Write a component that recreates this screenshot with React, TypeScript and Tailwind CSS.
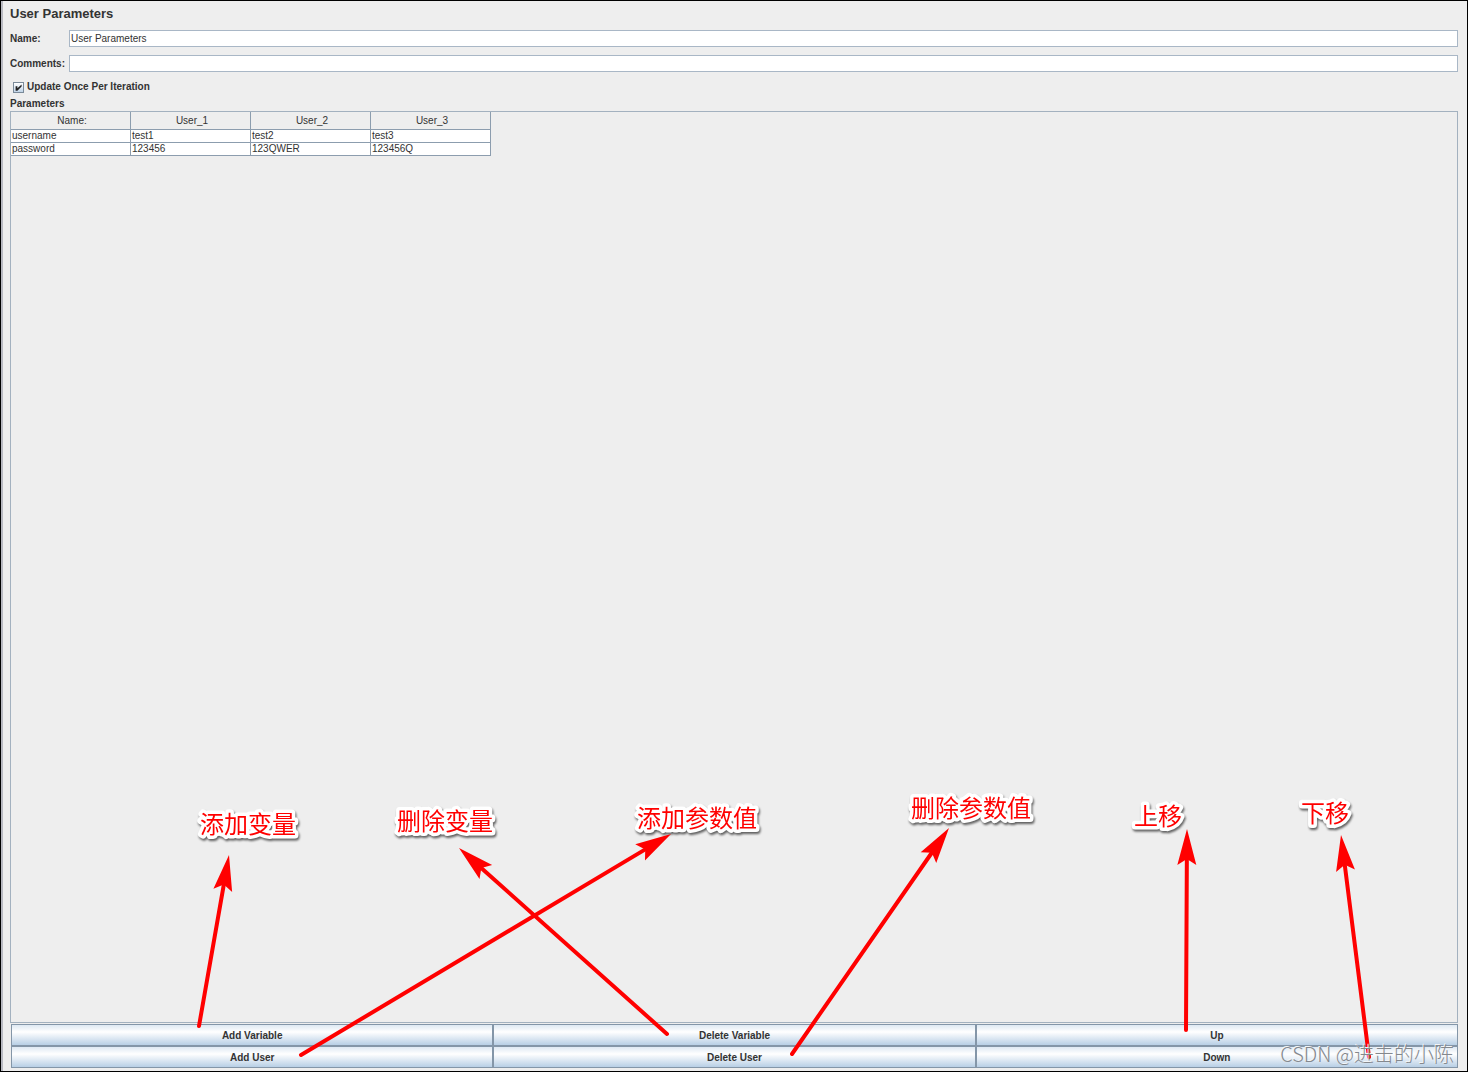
import { useState } from 'react';

interface Parameter {
  name: string;
  values: string[];
}

interface Note {
  text: string;
  at: [number, number];
  from: [number, number];
  to: [number, number];
}

const users = ['User_1', 'User_2', 'User_3'];

const parameters: Parameter[] = [
  { name: 'username', values: ['test1', 'test2', 'test3'] },
  { name: 'password', values: ['123456', '123QWER', '123456Q'] },
];

const actions = ['Add Variable', 'Delete Variable', 'Up', 'Add User', 'Delete User', 'Down'];

const notes: Note[] = [
  { text: '添加变量', at: [200, 833], from: [199, 1026], to: [229, 855] },
  { text: '删除变量', at: [397, 830], from: [667, 1034], to: [459, 848] },
  { text: '添加参数值', at: [637, 827], from: [301, 1055], to: [671, 834] },
  { text: '删除参数值', at: [911, 817], from: [792, 1054], to: [949, 828] },
  { text: '上移', at: [1134, 825], from: [1186, 1030], to: [1187, 829] },
  { text: '下移', at: [1301, 822], from: [1369, 1057], to: [1341, 835] },
];

// stops the shaft inside the arrow head so that it does not poke out of the tip
function shaftEnd({ from, to }: Note) {
  const length = Math.hypot(to[0] - from[0], to[1] - from[1]);
  const t = (length - 28) / length;
  return [from[0] + (to[0] - from[0]) * t, from[1] + (to[1] - from[1]) * t];
}

function TextField({ id, label, value, onChange }: {
  id: string;
  label: string;
  value: string;
  onChange: (value: string) => void;
}) {
  return (
    <div className="flex items-center">
      <label htmlFor={id} className="w-[59px] shrink-0 font-bold">{label}</label>
      <input
        id={id}
        type="text"
        value={value}
        onChange={(e) => onChange(e.target.value)}
        className="h-[17px] min-w-0 flex-1 border border-[#a9b7c6] bg-white px-px outline-none"
      />
    </div>
  );
}

function Annotations() {
  return (
    <div className="pointer-events-none absolute -inset-px overflow-hidden font-['Noto_Sans_CJK_SC',sans-serif]">
      <svg className="absolute left-0 top-0" width="1468" height="1072" fill="none">
        {notes.map((note) => {
          const [x, y] = shaftEnd(note);
          const angle = (Math.atan2(note.to[1] - note.from[1], note.to[0] - note.from[0]) * 180) / Math.PI;
          return (
            <g key={note.text}>
              <text
                x={note.at[0]}
                y={note.at[1]}
                fill="#ff0000"
                stroke="#ffffff"
                strokeWidth="7"
                strokeLinejoin="round"
                className="text-[24px] font-normal drop-shadow-[1px_2px_1px_rgba(0,0,0,0.6)] [paint-order:stroke_fill]"
              >
                {note.text}
              </text>
              <line x1={note.from[0]} y1={note.from[1]} x2={x} y2={y} stroke="#ff0000" strokeWidth="4" strokeLinecap="round" />
              <path
                d="M0 0L-36 -9.5L-30 0L-36 9.5Z"
                fill="#ff0000"
                transform={`translate(${note.to[0]} ${note.to[1]}) rotate(${angle})`}
              />
            </g>
          );
        })}
      </svg>
      <span className="absolute right-[14px] bottom-[3px] whitespace-nowrap text-[20px] leading-[30px] font-light text-[#84888d] [text-shadow:-1px_-1px_0_#f4f6f8]">
        CSDN @进击的小陈
      </span>
    </div>
  );
}

export default function App() {
  const [name, setName] = useState('User Parameters');
  const [comments, setComments] = useState('');
  const [perIteration, setPerIteration] = useState(true);

  return (
    <div className="relative flex h-screen flex-col border border-black bg-[#eeeeee] font-['Liberation_Sans',Arial,sans-serif] text-[10px] leading-[12px] text-[#333333]">
      <main className="flex min-h-0 flex-1 flex-col border-l-2 border-[#b9bac2] pr-[9px] pb-[3px] pl-[7px]">
        <h1 className="text-[13px] leading-[26px] font-bold">User Parameters</h1>

        <div className="mt-[3px] flex flex-col gap-2">
          <TextField id="name" label="Name:" value={name} onChange={setName} />
          <TextField id="comments" label="Comments:" value={comments} onChange={setComments} />
        </div>

        <label className="mt-2 ml-[3px] flex h-[14px] items-center gap-[3px] self-start font-bold">
          <span className="relative flex">
            <input
              type="checkbox"
              checked={perIteration}
              onChange={(e) => setPerIteration(e.target.checked)}
              className="peer size-[11px] appearance-none border border-[#7a8a99] bg-linear-to-b from-white to-[#c0d4e8]"
            />
            <svg className="pointer-events-none absolute inset-0 hidden peer-checked:block" width="11" height="11" viewBox="0 0 11 11">
              <path d="M2.6 4.2H4.4V6.2L8.6 2.4V4.4L4.4 8.8H2.6Z" fill="#222222" />
            </svg>
          </span>
          Update Once Per Iteration
        </label>

        <h2 className="mt-[3px] leading-[14px] font-bold">Parameters</h2>

        <div className="min-h-0 flex-1 overflow-auto border border-[#a3b1bf]">
          <table className="w-[480px] table-fixed border-separate border-spacing-0">
            <thead>
              <tr className="h-[18px]">
                {['Name:', ...users].map((title) => (
                  <th key={title} className="border-r border-b border-[#8c9dae] py-0 pr-0 pl-[3px] text-center font-normal">
                    {title}
                  </th>
                ))}
              </tr>
            </thead>
            <tbody>
              {parameters.map((parameter) => (
                <tr key={parameter.name} className="h-[13px] bg-white">
                  {[parameter.name, ...parameter.values].map((value) => (
                    <td key={value} className="border-r border-b border-[#8c9dae] py-0 pr-0 pl-px">
                      {value}
                    </td>
                  ))}
                </tr>
              ))}
            </tbody>
          </table>
        </div>

        <div className="mt-px ml-px grid grid-cols-3">
          {actions.map((action) => (
            <button
              key={action}
              type="button"
              className="h-[22px] border border-[#8496a8] bg-linear-to-b from-[#dfe9f3] via-white via-35% to-[#b8cfe5] pt-px font-bold"
            >
              {action}
            </button>
          ))}
        </div>
      </main>

      <Annotations />
    </div>
  );
}
